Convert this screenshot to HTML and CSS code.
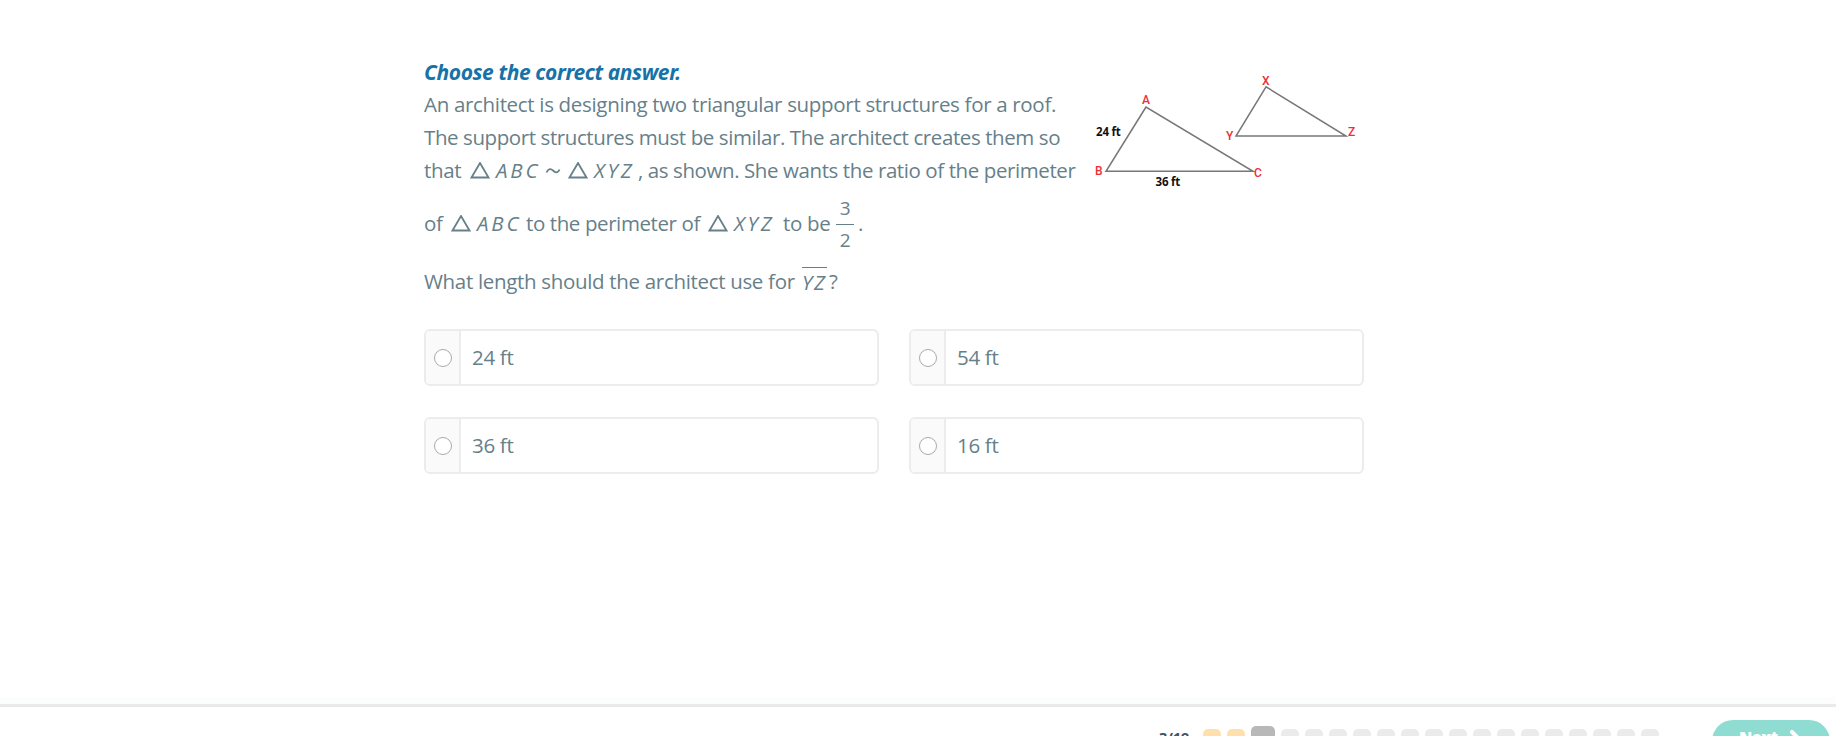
FILE: index.html
```
<!DOCTYPE html>
<html lang="en">
<head>
    <meta charset="utf-8">
    <title>Question 3</title>
    <link rel="stylesheet" href="styles.css">
</head>
<body>
    <div class="content">
        <div class="question">
            <div class="question-text">
                <h1>Choose the correct answer.</h1>
                <p>An architect is designing two triangular support structures for a roof.</p>
                <p class="tight">The support structures must be similar. The architect creates them so</p>
                <p class="parts"><span class="that">that</span><svg class="tri" viewBox="0 0 20 17"><path d="M1.5 15.5 L10 1 L18.5 15.5 Z"/></svg><i class="name">ABC</i><svg class="sim" viewBox="0 0 16 8"><path d="M1.5 5.5 C3.5 1 6 1.5 8 3.5 S12.5 7 14.5 2.5"/></svg><svg class="tri" viewBox="0 0 20 17"><path d="M1.5 15.5 L10 1 L18.5 15.5 Z"/></svg><i class="name xyz">XYZ</i><span class="tight">, as shown. She wants the ratio of the perimeter</span></p>
                <p class="parts ratio"><span class="of">of</span><svg class="tri" viewBox="0 0 20 17"><path d="M1.5 15.5 L10 1 L18.5 15.5 Z"/></svg><i class="name">ABC</i><span class="middle">to the perimeter of</span><svg class="tri" viewBox="0 0 20 17"><path d="M1.5 15.5 L10 1 L18.5 15.5 Z"/></svg><i class="name">XYZ</i><span class="tobe">to be</span><span class="frac"><span>3</span><span class="den">2</span></span><span class="dot">.</span></p>
                <p class="parts last"><span class="what">What length should the architect use for</span><i class="segment">YZ</i><span>?</span></p>
            </div>
            <svg class="figure" width="284" height="130" viewBox="1080 65 284 130">
                <path d="M1146 107 L1106 171.3 L1253 171.3 Z"/>
                <path d="M1266 86.8 L1236 136 L1346 136 Z"/>
                <g class="point">
                    <text x="1142" y="104">A</text>
                    <text x="1095" y="175">B</text>
                    <text x="1254" y="176.5">C</text>
                    <text x="1262" y="84.5">X</text>
                    <text x="1226" y="139.5">Y</text>
                    <text x="1348" y="136">Z</text>
                </g>
                <g class="side">
                    <text x="1096" y="136">24 ft</text>
                    <text x="1155.5" y="185.5">36 ft</text>
                </g>
            </svg>
        </div>

        <form class="answers">
            <label class="answer"><span class="pick"><input type="radio" name="answer"></span><span class="value">24 ft</span></label>
            <label class="answer"><span class="pick"><input type="radio" name="answer"></span><span class="value">54 ft</span></label>
            <label class="answer"><span class="pick"><input type="radio" name="answer"></span><span class="value">36 ft</span></label>
            <label class="answer"><span class="pick"><input type="radio" name="answer"></span><span class="value">16 ft</span></label>
        </form>
    </div>

    <div class="footer">
        <span class="count">3/19</span>
        <div class="steps">
            <i class="done"></i><i class="done"></i><i class="current"></i>
            <i></i><i></i><i></i><i></i><i></i><i></i><i></i><i></i>
            <i></i><i></i><i></i><i></i><i></i><i></i><i></i><i></i>
        </div>
        <button class="next"><span>Next</span><svg width="12" height="18" viewBox="0 0 12 18"><path d="M2 2 L9 9 L2 16"/></svg></button>
    </div>
</body>
</html>
```
FILE: styles.css
```
* {
    box-sizing: border-box;
}

body {
    font-family: "Open Sans", "Noto Sans", sans-serif;
    font-size: 20.5px;
    letter-spacing: -0.32px;
    color: #66808a;
    background-color: #fff;
    margin: 0;
    height: 736px;
    overflow: hidden;
    display: flex;
    flex-direction: column;
}

.content {
    width: 940px;
    margin: 0 0 0 424px;
    padding-top: 55px;
    flex: 1;
}

.question {
    display: flex;
    height: 274px;
    white-space: nowrap;
}

.question-text {
    width: 656px;
}

h1 {
    font-family: "Noto Sans", sans-serif;
    font-size: 21px;
    font-weight: 700;
    font-style: italic;
    letter-spacing: -0.4px;
    color: #1672a8;
    line-height: 34px;
    height: 33px;
    margin: 0;
}

p {
    margin: 0;
    line-height: 33px;
}

.tight {
    letter-spacing: -0.41px;
}

.parts {
    display: flex;
    align-items: center;
}

.parts > * {
    flex: none;
}

.tri {
    width: 20px;
    height: 17px;
    margin-right: 6px;
    fill: none;
    stroke: #66808a;
    stroke-width: 1.8;
}

.name {
    width: 49px;
    letter-spacing: 2.8px;
}

.xyz {
    width: 44px;
}

.sim {
    width: 16px;
    height: 8px;
    margin-right: 7px;
    fill: none;
    stroke: #66808a;
    stroke-width: 1.8;
}

.that {
    width: 46px;
}

.of {
    width: 27px;
}

.middle {
    width: 182px;
    letter-spacing: -0.4px;
}

.tobe {
    width: 53px;
}

.what {
    width: 378px;
}

.ratio {
    height: 73px;
}

.frac {
    display: flex;
    flex-direction: column;
    width: 18px;
    margin-right: 4px;
    text-align: center;
    font-size: 19px;
    line-height: 32px;
}

.den {
    border-top: 1px solid #66808a;
    line-height: 31px;
}

.last {
    padding-top: 5px;
}

.segment {
    width: 25px;
    margin-right: 2px;
    border-top: 1px solid #66808a;
    line-height: 29px;
    letter-spacing: 1.5px;
}

.figure {
    margin-top: 10px;
    flex: none;
    letter-spacing: 0;
}

.figure path {
    fill: none;
    stroke: #777;
    stroke-width: 1.5;
}

.point {
    font: 500 12px Roboto, sans-serif;
    fill: #ee2e35;
}

.side {
    font: 700 11.5px "Open Sans", sans-serif;
    letter-spacing: -0.2px;
    fill: #111;
}

.answers {
    display: grid;
    grid-template-columns: 455px 455px;
    gap: 31px 30px;
}

.answer {
    display: flex;
    height: 57px;
    border: 2px solid #ececec;
    border-radius: 6px;
    overflow: hidden;
}

.pick {
    width: 35px;
    display: flex;
    align-items: center;
    padding-left: 8px;
    background-color: #fafafa;
    border-right: 2px solid #ececec;
}

.pick input {
    appearance: none;
    width: 18px;
    height: 18px;
    margin: 0;
    border: 1px solid #aaa;
    border-radius: 50%;
    background-color: #fff;
}

.value {
    padding-left: 11px;
    line-height: 53px;
    letter-spacing: -0.3px;
}

.footer {
    height: 32px;
    border-top: 3px solid #e9ebea;
    box-shadow: 0 -7px 0 #fbfefd;
    display: flex;
    align-items: flex-start;
    padding-left: 1159px;
}

.count {
    width: 44px;
    padding-top: 21px;
    font-size: 14.5px;
    font-weight: 700;
    letter-spacing: -0.2px;
    line-height: 20px;
    color: #43535f;
}

.steps {
    display: flex;
    gap: 6px;
    padding-top: 19px;
    width: 509px;
    align-items: flex-end;
}

.steps i {
    width: 18px;
    height: 21px;
    flex: none;
    border-radius: 5px;
    background-color: #ebebeb;
}

.steps .done {
    background-color: #ffe0ad;
}

.steps .current {
    width: 24px;
    height: 24px;
    background-color: #b8b8b8;
}

.next {
    width: 118px;
    height: 42px;
    margin-top: 13px;
    padding: 0 0 0 27px;
    border: none;
    border-radius: 21px;
    background-color: #8fdcd3;
    color: #fff;
    font: 800 16px "Open Sans", sans-serif;
    letter-spacing: -0.5px;
    display: flex;
    align-items: flex-start;
}

.next span {
    width: 51px;
    text-align: left;
    line-height: 22px;
    padding-top: 6px;
}

.next svg {
    margin-top: 10px;
    fill: none;
    stroke: #fff;
    stroke-width: 4;
    stroke-linecap: round;
}
```
